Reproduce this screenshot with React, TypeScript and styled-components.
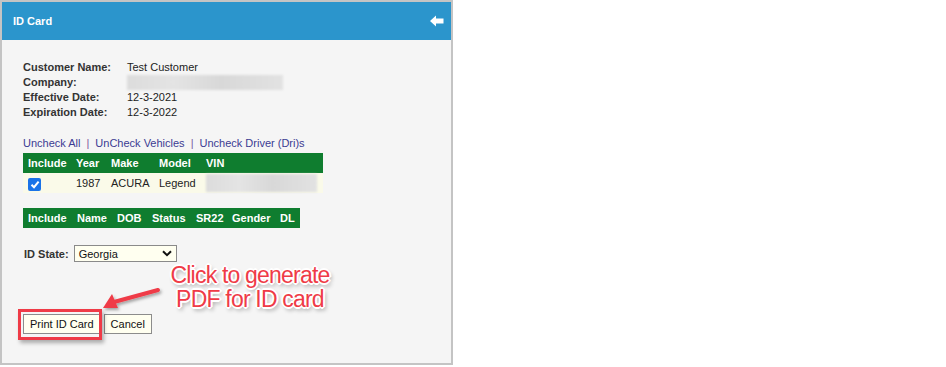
import React from "react";
import styled, { createGlobalStyle } from "styled-components";

const Global = createGlobalStyle`
  html, body { margin: 0; padding: 0; background: #ffffff; }
  body { font-family: "Liberation Sans", Arial, sans-serif; font-size: 11px; color: #222; }
`;

const Page = styled.div`
  position: relative;
  width: 946px;
  height: 367px;
`;

const Panel = styled.div`
  box-sizing: border-box;
  width: 453px;
  height: 365px;
  border: 2px solid #c4c4c4;
  background: #f5f5f5;
  display: flex;
  flex-direction: column;
`;

const Header = styled.div`
  height: 38px;
  background: #2b95cc;
  display: flex;
  align-items: center;
  justify-content: space-between;
  padding: 0 7px 0 11px;
  color: #fff;
  font-weight: bold;
  font-size: 11px;
`;

const Body = styled.div`
  padding: 20px 0 0 21px;
  display: flex;
  flex-direction: column;
`;

const InfoGrid = styled.div`
  display: grid;
  grid-template-columns: 104px auto;
  line-height: 15px;
  color: #222;
`;

const Label = styled.div`
  font-weight: bold;
  color: #333;
`;

const BlurCell = styled.div`
  display: flex;
  align-items: center;
`;

const Blur = styled.div<{ $w: number; $h: number }>`
  width: ${(p) => p.$w}px;
  height: ${(p) => p.$h}px;
  background: linear-gradient(90deg, #dcdcdc, #e4e4e4 30%, #d8d8d8 60%, #e2e2e2);
  filter: blur(1px);
`;

const Links = styled.div`
  margin-top: 16px;
  display: flex;
  gap: 6px;
  color: #3b3b93;
  line-height: 15px;
`;

const Sep = styled.span`
  color: #7a5aa0;
`;

const Table = styled.div<{ $w: number; $mt: number }>`
  width: ${(p) => p.$w}px;
  margin-top: ${(p) => p.$mt}px;
  display: flex;
  flex-direction: column;
`;

const HeadRow = styled.div<{ $cols: string }>`
  display: grid;
  grid-template-columns: ${(p) => p.$cols};
  height: 20px;
  align-items: center;
  padding-left: 5px;
  background: #0f7d2f;
  color: #fff;
  font-weight: bold;
`;

const DataRow = styled.div<{ $cols: string }>`
  display: grid;
  grid-template-columns: ${(p) => p.$cols};
  height: 20px;
  align-items: center;
  padding-left: 5px;
  background: #fafae9;
  color: #222;
`;

const Check = styled.span`
  width: 13px;
  height: 13px;
  border-radius: 2px;
  background: #1a73e8;
  display: flex;
  align-items: center;
  justify-content: center;
  margin-top: 2px;
`;

const StateRow = styled.div`
  margin-top: 17px;
  display: flex;
  align-items: center;
  gap: 5px;
  font-weight: bold;
  color: #333;
  padding-left: 1px;
`;

const Select = styled.div`
  box-sizing: border-box;
  width: 103px;
  height: 17px;
  border: 1px solid #8a8a8a;
  background: #fffff0;
  display: flex;
  align-items: center;
  justify-content: space-between;
  padding: 0 4px;
  font-weight: normal;
  color: #111;
`;

const Buttons = styled.div`
  margin-top: 52px;
  display: flex;
  gap: 3px;
`;

const Button = styled.div`
  box-sizing: border-box;
  height: 20px;
  padding: 0 6px;
  border: 1px solid #8c8c8c;
  background: #fffff0;
  display: flex;
  align-items: center;
  color: #111;
  font-size: 11px;
`;

const Highlight = styled.div`
  position: absolute;
  left: 18px;
  top: 309px;
  width: 84px;
  height: 31px;
  box-sizing: border-box;
  border: 3px solid #ef3b47;
  box-shadow: 2px 3px 4px rgba(0, 0, 0, 0.3);
`;

const Note = styled.div`
  position: absolute;
  left: 150px;
  top: 263px;
  width: 200px;
  text-align: center;
  font-family: "Liberation Sans", Arial, sans-serif;
  font-size: 23px;
  letter-spacing: -0.8px;
  line-height: 24px;
  color: #ef3b47;
  text-shadow:
    -1px -1px 0 #fff, 1px -1px 0 #fff, -1px 1px 0 #fff, 1px 1px 0 #fff,
    0 -2px 0 #fff, 0 2px 0 #fff, -2px 0 0 #fff, 2px 0 0 #fff,
    2px 3px 4px rgba(0, 0, 0, 0.45);
`;

const ArrowSvg = styled.svg`
  position: absolute;
  left: 100px;
  top: 284px;
  overflow: visible;
`;

const vCols = "48px 35px 48px 47px 1fr";
const dCols = "49px 40px 35px 44px 36px 48px 1fr";

export default function App() {
  return (
    <Page>
      <Global />
      <Panel>
        <Header>
          <span>ID Card</span>
          <svg width="14" height="12" viewBox="0 0 14 12">
            <path d="M0 6 L6 0.5 L6 3.5 L13.5 3.5 L13.5 8.5 L6 8.5 L6 11.5 Z" fill="#fff" />
          </svg>
        </Header>
        <Body>
          <InfoGrid>
            <Label>Customer Name:</Label>
            <div>Test Customer</div>
            <Label>Company:</Label>
            <BlurCell>
              <Blur $w={156} $h={15} />
            </BlurCell>
            <Label>Effective Date:</Label>
            <div>12-3-2021</div>
            <Label>Expiration Date:</Label>
            <div>12-3-2022</div>
          </InfoGrid>
          <Links>
            <span>Uncheck All</span>
            <Sep>|</Sep>
            <span>UnCheck Vehicles</span>
            <Sep>|</Sep>
            <span>Uncheck Driver (Dri)s</span>
          </Links>
          <Table $w={300} $mt={2}>
            <HeadRow $cols={vCols}>
              <span>Include</span>
              <span>Year</span>
              <span>Make</span>
              <span>Model</span>
              <span>VIN</span>
            </HeadRow>
            <DataRow $cols={vCols}>
              <Check>
                <svg width="10" height="9" viewBox="0 0 10 9">
                  <path d="M1.5 4.8 L4 7.2 L8.6 1.6" stroke="#fff" strokeWidth="2" fill="none" />
                </svg>
              </Check>
              <span>1987</span>
              <span>ACURA</span>
              <span>Legend</span>
              <Blur $w={111} $h={18} />
            </DataRow>
          </Table>
          <Table $w={277} $mt={15}>
            <HeadRow $cols={dCols}>
              <span>Include</span>
              <span>Name</span>
              <span>DOB</span>
              <span>Status</span>
              <span>SR22</span>
              <span>Gender</span>
              <span>DL</span>
            </HeadRow>
          </Table>
          <StateRow>
            <span>ID State:</span>
            <Select>
              <span>Georgia</span>
              <svg width="10" height="7" viewBox="0 0 10 7">
                <path d="M1 1.2 L5 5.2 L9 1.2" stroke="#111" strokeWidth="2" fill="none" />
              </svg>
            </Select>
          </StateRow>
          <Buttons>
            <Button>Print ID Card</Button>
            <Button>Cancel</Button>
          </Buttons>
        </Body>
      </Panel>
      <Highlight />
      <ArrowSvg width="70" height="30" viewBox="0 0 70 30">
        <defs>
          <filter id="sh" x="-20%" y="-40%" width="150%" height="200%">
            <feDropShadow dx="1.5" dy="2" stdDeviation="1.5" floodColor="#000" floodOpacity="0.35" />
          </filter>
        </defs>
        <g filter="url(#sh)">
          <path d="M58 6 L14 18" stroke="#ef3b47" strokeWidth="4" strokeLinecap="round" fill="none" />
          <path d="M3 24 L12 10 L18 24 Z" fill="#ef3b47" />
        </g>
      </ArrowSvg>
      <Note>
        Click to generate
        <br />
        PDF for ID card
      </Note>
    </Page>
  );
}
